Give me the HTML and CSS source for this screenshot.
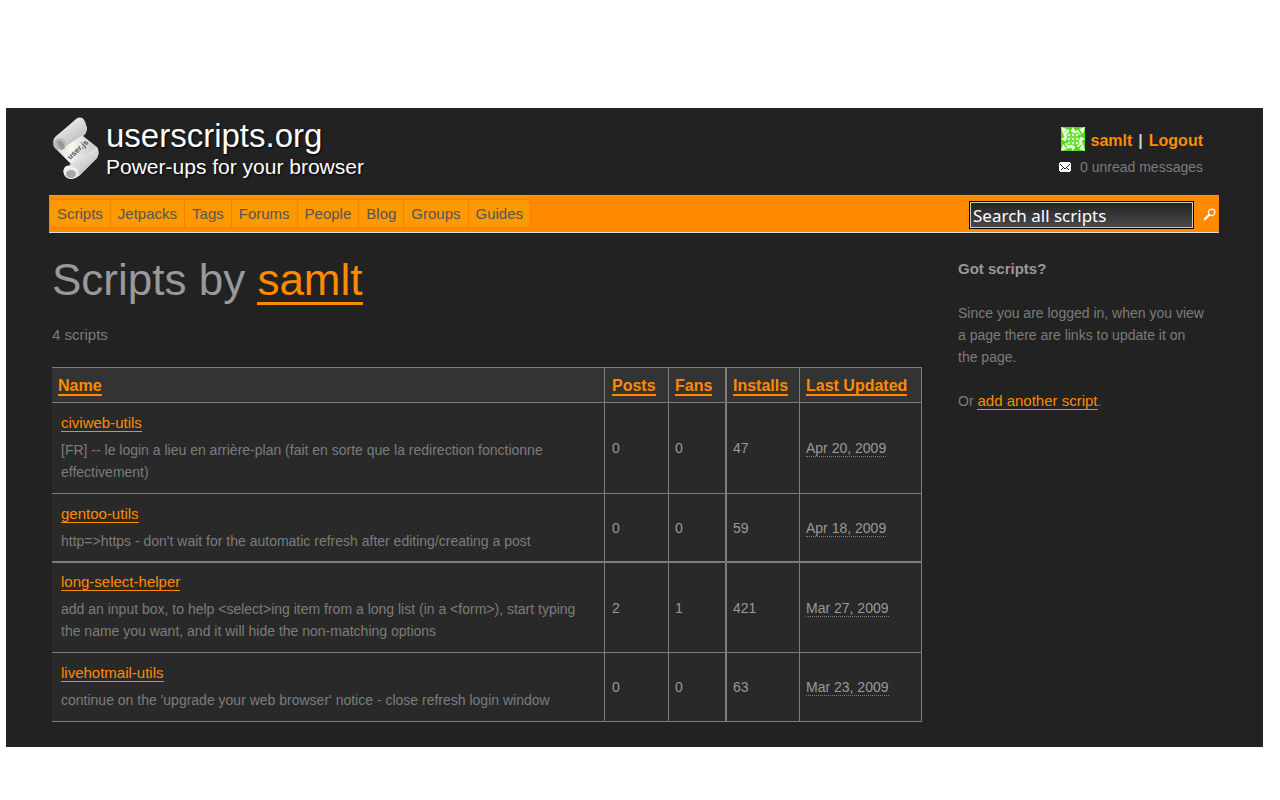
FILE: index.html
```html
<!DOCTYPE html>
<html lang="en">
<head>
<meta charset="utf-8">
<title>Scripts by samlt – userscripts.org</title>
<link rel="stylesheet" href="styles.css">
</head>
<body>
<div class="page">
  <header class="header">
    <a class="brand" href="#">
      <svg class="brand-mark" viewBox="0 0 48 64" aria-hidden="true">
        <defs>
          <linearGradient id="paper" x1="0" y1="0" x2="1" y2="0.3">
            <stop offset="0" stop-color="#c4c4c4"/><stop offset="0.5" stop-color="#f6f6f6"/><stop offset="1" stop-color="#c8c8c8"/>
          </linearGradient>
          <linearGradient id="roll" x1="0" y1="0" x2="0.7" y2="1">
            <stop offset="0" stop-color="#ffffff"/><stop offset="1" stop-color="#b8b8b8"/>
          </linearGradient>
        </defs>
        <path d="M3 20 L24 3 Q30 -2 33 5 L35 11 Q35 16 31 19 L45 30 Q48 36 45 41 L27 59 Q19 65 13 59 Q9 53 14 49 L20 48 L2 30 Q0 24 3 20Z" fill="url(#paper)"/>
        <path d="M2 24 Q3 19 8 16 L24 2 Q30 -2 33 5 L35 11 Q35 15 31 18 L14 29 Q14 22 8 21 Q4 21 2 24Z" fill="url(#roll)"/>
        <ellipse cx="8" cy="27" rx="6" ry="6" fill="#b8b8b8"/>
        <path d="M5 24 Q12 23 13 31 L10 33 Q6 30 5 24Z" fill="#989898"/>
        <path d="M17 48 L45 30 Q48 36 45 41 L27 59 Q29 51 22 50Z" fill="url(#roll)"/>
        <ellipse cx="19" cy="56" rx="7" ry="6" fill="#ececec"/>
        <ellipse cx="19" cy="57" rx="5" ry="4" fill="#a8a8a8"/>
        <text class="mark-text" x="18" y="43" transform="rotate(-42 18 43)">user.js</text>
      </svg>
      <span class="brand-text">
        <span class="brand-name">userscripts.org</span>
        <span class="brand-tag">Power-ups for your browser</span>
      </span>
    </a>
    <div class="account">
      <div class="account-row">
        <svg class="avatar" viewBox="0 0 24 24" aria-hidden="true">
          <rect width="24" height="24" fill="#4cdd0c"/>
          <g fill="#f0ffe8">
            <path d="M0 0L6 2L2 7ZM24 0L18 2L22 7ZM0 24L6 22L2 17ZM24 24L18 22L22 17Z"/>
            <path d="M7 2L11 5L17 3L20 7L19 11L22 17L17 20L13 19L7 22L4 17L5 13L2 7Z"/>
            <path d="M0 12L5 9V15ZM24 12L19 9V15ZM12 0L9 5H15ZM12 24L9 19H15Z"/>
          </g>
          <g fill="#4cdd0c">
            <path d="M8 3L12 6L8 7ZM21 8L18 12L17 8ZM16 21L12 18L16 17ZM3 16L6 12L7 16Z"/>
          </g>
          <g fill="#d8fcc8" stroke="#4cdd0c">
            <circle cx="8" cy="8" r="2"/><circle cx="12" cy="8" r="2"/><circle cx="16" cy="8" r="2"/>
            <circle cx="8" cy="12" r="2"/><circle cx="12" cy="12" r="2"/><circle cx="16" cy="12" r="2"/>
            <circle cx="8" cy="16" r="2"/><circle cx="12" cy="16" r="2"/><circle cx="16" cy="16" r="2"/>
          </g>
        </svg>
        <a href="#">samlt</a><span>|</span><a href="#">Logout</a>
      </div>
      <a class="messages" href="#">
        <svg class="envelope" viewBox="0 0 12 10" shape-rendering="crispEdges" aria-hidden="true">
          <path d="M1 0H11V1H12V9H11V10H1V9H0V1H1Z" fill="#fff"/>
          <path d="M1 2h1v1h1v1h1v1h1v1h2v-1h1v-1h1v-1h1v-1h1v1h-1v1h-1v1h-1v1h1v1h1v1h-1v-1h-1v-1h-1v1h-2v-1h-1v1h-1v1h-1v-1h1v-1h1v-1h-1v-1h-1v-1h-1z" fill="#222"/>
        </svg>
        <span>0 unread messages</span>
      </a>
    </div>
  </header>

  <nav class="bar">
    <ul class="tabs">
      <li><a href="#">Scripts</a></li>
      <li><a href="#">Jetpacks</a></li>
      <li><a href="#">Tags</a></li>
      <li><a href="#">Forums</a></li>
      <li><a href="#">People</a></li>
      <li><a href="#">Blog</a></li>
      <li><a href="#">Groups</a></li>
      <li><a href="#">Guides</a></li>
    </ul>
    <form class="search">
      <input class="search-box" type="text" value="Search all scripts" aria-label="Search all scripts">
      <button class="search-button" type="button" aria-label="Search">
        <svg viewBox="0 0 12 12" aria-hidden="true"><circle cx="8" cy="4" r="3" fill="none" stroke="#fff"/><path d="M6 6L1 11" stroke="#fff" stroke-width="2"/></svg>
      </button>
    </form>
  </nav>

  <div class="columns">
    <main class="main">
      <h1 class="title">Scripts by <a href="#">samlt</a></h1>
      <p class="count">4 scripts</p>
      <table class="scripts">
        <thead>
          <tr>
            <th class="col-name"><a href="#">Name</a></th>
            <th class="col-posts"><a href="#">Posts</a></th>
            <th class="col-fans"><a href="#">Fans</a></th>
            <th class="col-installs"><a href="#">Installs</a></th>
            <th class="col-updated"><a href="#">Last Updated</a></th>
          </tr>
        </thead>
        <tbody>
          <tr>
            <td><a class="script" href="#">civiweb-utils</a><p class="desc">[FR] -- le login a lieu en arrière-plan (fait en sorte que la redirection fonctionne effectivement)</p></td>
            <td>0</td><td>0</td><td>47</td><td><abbr>Apr 20, 2009</abbr></td>
          </tr>
          <tr class="ruled">
            <td><a class="script" href="#">gentoo-utils</a><p class="desc">http=&gt;https - don't wait for the automatic refresh after editing/creating a post</p></td>
            <td>0</td><td>0</td><td>59</td><td><abbr>Apr 18, 2009</abbr></td>
          </tr>
          <tr>
            <td><a class="script" href="#">long-select-helper</a><p class="desc">add an input box, to help &lt;select&gt;ing item from a long list (in a &lt;form&gt;), start typing the name you want, and it will hide the non-matching options</p></td>
            <td>2</td><td>1</td><td>421</td><td><abbr>Mar 27, 2009</abbr></td>
          </tr>
          <tr>
            <td><a class="script" href="#">livehotmail-utils</a><p class="desc">continue on the 'upgrade your web browser' notice - close refresh login window</p></td>
            <td>0</td><td>0</td><td>63</td><td><abbr>Mar 23, 2009</abbr></td>
          </tr>
        </tbody>
      </table>
    </main>
    <aside class="side">
      <h2>Got scripts?</h2>
      <p>Since you are logged in, when you view a page there are links to update it on the page.</p>
      <p>Or <a href="#">add another script</a>.</p>
    </aside>
  </div>
</div>
</body>
</html>
```
FILE: styles.css
```css
* { box-sizing: border-box; }
body {
  margin: 0;
  padding: 108px 17px 53px 6px;
  background: #fff;
  color: #7c7c7c;
  font: 14px/22px "Liberation Sans", Arial, sans-serif;
}
a { color: #ff8a00; }
.page { background: #222; padding: 0 44px 25px 43px; }
.header { display: flex; justify-content: space-between; height: 87px; padding: 9px 16px 0 3px; }
.brand { display: flex; gap: 6px; color: #fff; text-decoration: none; }
.brand-mark { width: 48px; height: 64px; }
.mark-text { font-size: 8px; font-weight: bold; fill: #555; }
.brand-text { display: flex; flex-direction: column; text-shadow: 1px 1px 2px #000; }
.brand-name { font-size: 33px; line-height: 38px; }
.brand-tag { font-size: 21px; line-height: 24px; }
.account { display: flex; flex-direction: column; align-items: flex-end; padding-top: 10px; }
.account-row { display: flex; gap: 6px; height: 29px; font-size: 16px; line-height: 28px; font-weight: bold; color: #ccc; }
.account-row a { text-decoration: none; }
.avatar { width: 24px; height: 24px; }
.messages { display: flex; align-items: center; gap: 9px; color: #7c7c7c; text-decoration: none; }
.envelope { width: 12px; height: 10px; }
.bar {
  display: flex; justify-content: space-between; height: 38px; padding-top: 3px;
  background: #ff8a00; border-top: 1px solid #ff9c10; border-bottom: 1px solid #ddd;
}
.tabs { display: flex; height: 29px; margin: 0; padding: 0; list-style: none; border: 1px solid #ff7d00; border-radius: 5px; background: #ff9900; }
.tabs li + li { border-left: 1px solid #ff7d00; }
.tabs a { display: block; padding: 0 7px; font-size: 15px; line-height: 28px; color: #555; text-decoration: none; }
.search { display: flex; gap: 9px; padding: 2px 3px 0 0; }
.search-box {
  width: 225px; height: 28px; padding: 0 3px; border: 1px solid #000; outline: 1px solid #ccc; outline-offset: -2px;
  background: linear-gradient(#222, #4a4a4a); color: #fff; font: 17px "Noto Sans", sans-serif;
}
.search-button { width: 13px; height: 26px; padding: 0; border: 0; background: none; }
.search-button svg { display: block; width: 13px; height: 13px; }
.columns { display: flex; gap: 36px; padding: 22px 3px 0; }
.main { flex: 1; }
.side { width: 258px; padding: 3px 9px 0 0; }
.title { margin: 0; font-size: 44px; line-height: 50px; font-weight: normal; color: #999; }
.title a { text-decoration: none; border-bottom: 3px solid; display: inline-block; line-height: 44px; }
.count { margin: 19px 0 21px; font-size: 15px; }
.scripts { width: 100%; border-collapse: separate; border-spacing: 0; table-layout: fixed; border-top: 1px solid #7c7c7c; background: #292929; }
.scripts th, .scripts td { padding: 0 6px; text-align: left; border-right: 1px solid #7c7c7c; border-bottom: 1px solid #7c7c7c; }
.scripts th { height: 35px; padding-top: 1px; background: #333; font-size: 16px; }
.scripts th a { text-decoration: none; border-bottom: 2px solid; }
.scripts td { color: #999; }
.scripts td:first-child { padding: 9px 6px 10px 9px; }
.scripts th:nth-child(2), .scripts td:nth-child(2) { padding-left: 7px; }
.scripts th:nth-child(3), .scripts td:nth-child(3) { border-right-width: 2px; }
.scripts .ruled td { border-bottom-width: 2px; }
.scripts .ruled td:first-child { padding-bottom: 9px; }
.scripts .ruled + tr td:first-child { padding-top: 8px; }
.col-posts { width: 64px; }
.col-fans { width: 58px; }
.col-installs { width: 73px; }
.col-updated { width: 122px; }
.script, .side a { text-decoration: none; border-bottom: 1px solid; font-size: 15px; line-height: 22px; }
.desc { margin: 5px 0 0; color: #7c7c7c; }
abbr { text-decoration: none; border-bottom: 1px dotted #7c7c7c; }
.side h2 { margin: 0 0 22px; font-size: 15px; line-height: 22px; color: #999; }
.side p { margin: 0 0 22px; }
```
